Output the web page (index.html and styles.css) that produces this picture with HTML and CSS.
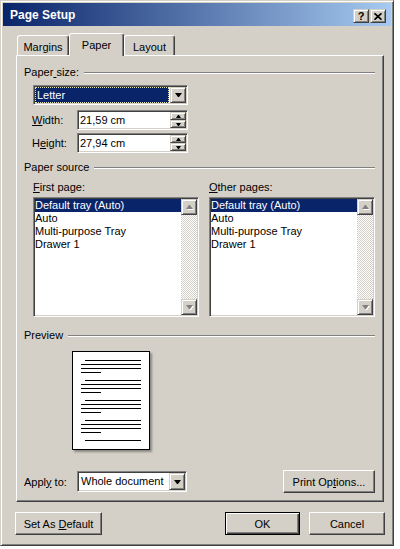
FILE: index.html
```html
<!DOCTYPE html>
<html lang="en">
<head>
  <meta charset="UTF-8">
  <meta name="viewport" content="width=device-width">
  <title>Page Setup</title>
  <link rel="stylesheet" href="styles.css">
</head>
<body>
  <div class="window">
    <div class="titlebar">
      <span class="title">Page Setup</span>
      <div class="caption-buttons">
        <span class="cbtn raised">?</span>
        <span class="cbtn raised">
          <svg width="8" height="7" viewBox="0 0 8 7"><path d="M0.5 0.3l7 6.4M7.5 0.3l-7 6.4" stroke="#000" stroke-width="1.7" fill="none"/></svg>
        </span>
      </div>
    </div>

    <div class="client">
      <div class="tabs">
        <div class="tab tab-margins">Margins</div>
        <div class="tab tab-paper active">Paper</div>
        <div class="tab tab-layout">Layout</div>
      </div>

      <div class="panel">
        <div class="group">Paper<u> </u>size:</div>
        <div class="combo combo-size">
          <span class="combo-value selected">Letter</span>
          <span class="drop raised"><i class="arrow-down"></i></span>
        </div>
        <div class="field-row first">
          <span class="field-label"><u>W</u>idth:</span>
          <div class="spin">
            <span class="spin-value">21,59 cm</span>
            <span class="spin-btns">
              <span class="spin-btn raised"><i class="arrow-up-sm"></i></span>
              <span class="spin-btn raised"><i class="arrow-down-sm"></i></span>
            </span>
          </div>
        </div>
        <div class="field-row">
          <span class="field-label">H<u>e</u>ight:</span>
          <div class="spin">
            <span class="spin-value">27,94 cm</span>
            <span class="spin-btns">
              <span class="spin-btn raised"><i class="arrow-up-sm"></i></span>
              <span class="spin-btn raised"><i class="arrow-down-sm"></i></span>
            </span>
          </div>
        </div>

        <div class="group group-source">Paper source</div>
        <div class="sources">
          <div class="source">
            <div class="source-label"><u>F</u>irst page:</div>
            <div class="list">
              <div class="list-items">
                <div class="item sel">Default tray (Auto)</div>
                <div class="item">Auto</div>
                <div class="item">Multi-purpose Tray</div>
                <div class="item">Drawer 1</div>
              </div>
              <div class="scrollbar">
                <span class="sb-btn raised"><i class="arrow-up dis"></i></span>
                <span class="sb-btn raised"><i class="arrow-down dis"></i></span>
              </div>
            </div>
          </div>
          <div class="source">
            <div class="source-label"><u>O</u>ther pages:</div>
            <div class="list">
              <div class="list-items">
                <div class="item sel">Default tray (Auto)</div>
                <div class="item">Auto</div>
                <div class="item">Multi-purpose Tray</div>
                <div class="item">Drawer 1</div>
              </div>
              <div class="scrollbar">
                <span class="sb-btn raised"><i class="arrow-up dis"></i></span>
                <span class="sb-btn raised"><i class="arrow-down dis"></i></span>
              </div>
            </div>
          </div>
        </div>

        <div class="group group-preview">Preview</div>
        <div class="page">
          <svg width="76" height="97" viewBox="0 0 76 97">
            <g stroke="#000" stroke-width="1">
              <path d="M12 8.5h56M8 12.5h60M8 16.5h60M8 20.5h20"/>
              <path d="M12 28.5h56M8 32.5h60M8 36.5h60M8 40.5h20"/>
              <path d="M12 48.5h56M8 52.5h60M8 56.5h60M8 60.5h20"/>
              <path d="M12 68.5h56M8 72.5h60M8 76.5h60M8 80.5h20"/>
              <path d="M12 88.5h56"/>
            </g>
          </svg>
        </div>

        <div class="apply-row">
          <span class="field-label">Appl<u>y</u> to:</span>
          <div class="combo combo-apply">
            <span class="combo-value">Whole document</span>
            <span class="drop raised"><i class="arrow-down"></i></span>
          </div>
          <button class="btn btn-print">Print Op<u>t</u>ions...</button>
        </div>
      </div>

      <div class="footer">
        <button class="btn btn-default-set">Set As <u>D</u>efault</button>
        <button class="btn btn-ok">OK</button>
        <button class="btn btn-cancel">Cancel</button>
      </div>
    </div>
  </div>
</body>
</html>
```

FILE: styles.css
```css
body {
  margin: 0;
  background: #fff;
  font: 11px "Liberation Sans", Arial, sans-serif;
  color: #000;
}
u {
  text-decoration: underline;
  text-underline-offset: 1px;
}
.window {
  width: 394px;
  height: 546px;
  box-sizing: border-box;
  background: #d4d0c8;
  border: 1px solid;
  border-color: #d4d0c8 #404040 #404040 #d4d0c8;
  box-shadow: inset 1px 1px #fff, inset -1px -1px #808080;
  padding: 2px;
  display: flex;
  flex-direction: column;
}
.raised {
  box-sizing: border-box;
  background: #d4d0c8;
  border: 1px solid;
  border-color: #d4d0c8 #404040 #404040 #d4d0c8;
  box-shadow: inset 1px 1px #fff, inset -1px -1px #808080;
}

/* caption */
.titlebar {
  height: 23px;
  display: flex;
  align-items: center;
  padding: 0 5px 0 7px;
  background: linear-gradient(to right, #0a246a, #a6caf0);
}
.title {
  color: #fff;
  font-weight: bold;
  font-size: 12px;
  flex: 1;
}
.caption-buttons {
  display: flex;
  gap: 1px;
  margin-top: 3px;
}
.cbtn {
  width: 16px;
  height: 14px;
  display: flex;
  align-items: center;
  justify-content: center;
  font-weight: bold;
  font-size: 11px;
  line-height: 12px;
}

/* client area */
.client {
  display: flex;
  flex-direction: column;
  padding: 7px 7px 0 13px;
}
.tabs {
  display: flex;
  align-items: flex-end;
  height: 22px;
  padding-left: 1px;
}
.tab {
  box-sizing: border-box;
  height: 20px;
  padding-top: 3px;
  line-height: 16px;
  text-align: center;
  border: 1px solid;
  border-bottom: none;
  border-color: #fff #404040 transparent #fff;
  box-shadow: inset -1px 0 #808080;
  border-radius: 3px 3px 0 0;
  background: #d4d0c8;
}
.tab-margins { width: 52px; }
.tab-paper { width: 55px; }
.tab-layout { width: 51px; }
.tab.active {
  height: 23px;
  margin-bottom: -1px;
  position: relative;
  z-index: 1;
}

.panel {
  border: 1px solid;
  border-color: #fff #404040 #404040 #fff;
  box-shadow: inset -1px -1px #808080;
  padding: 10px 8px 8px 7px;
}
.group {
  display: flex;
  align-items: center;
  height: 13px;
  line-height: 13px;
  white-space: pre;
}
.group::after {
  content: "";
  flex: 1;
  border-top: 1px solid #808080;
  border-bottom: 1px solid #fff;
  margin-left: 5px;
}
.group-source { margin-top: 8px; }
.group-preview { margin-top: 12px; }

/* sunken fields */
.combo,
.spin,
.list {
  box-sizing: border-box;
  background: #fff;
  border: 1px solid;
  border-color: #808080 #fff #fff #808080;
  box-shadow: inset 1px 1px #404040, inset -1px -1px #d4d0c8;
  padding: 1px;
  display: flex;
}
.combo-size {
  width: 155px;
  height: 20px;
  margin: 6px 0 0 9px;
}
.combo-apply {
  width: 110px;
  height: 21px;
}
.combo-value {
  flex: 1;
  line-height: 16px;
  padding-left: 2px;
  white-space: nowrap;
}
.combo-value.selected {
  background: #0a246a;
  color: #fff;
  outline: 1px dotted #e0e0b0;
  outline-offset: -1px;
  margin-right: 1px;
}
.drop {
  width: 16px;
  display: flex;
  align-items: center;
  justify-content: center;
}
.arrow-down,
.arrow-up {
  width: 1px;
  height: 0;
  border-left: 3px solid transparent;
  border-right: 3px solid transparent;
}
.arrow-down { border-top: 4px solid #000; }
.arrow-up { border-bottom: 4px solid #000; }
.arrow-down.dis { border-top-color: #808080; filter: drop-shadow(1px 1px 0 #fff); }
.arrow-up.dis { border-bottom-color: #808080; filter: drop-shadow(1px 1px 0 #fff); }
.arrow-down-sm,
.arrow-up-sm {
  width: 1px;
  height: 0;
  border-left: 2px solid transparent;
  border-right: 2px solid transparent;
}
.arrow-down-sm { border-top: 3px solid #000; }
.arrow-up-sm { border-bottom: 3px solid #000; }

.field-row {
  display: flex;
  align-items: center;
  margin: 3px 0 0 8px;
}
.field-row.first { margin-top: 5px; }
.field-label {
  width: 45px;
  white-space: nowrap;
}
.apply-row .field-label { width: 53px; }
.spin {
  width: 111px;
  height: 20px;
}
.spin-value {
  flex: 1;
  line-height: 16px;
  padding-left: 1px;
}
.spin-btns {
  width: 16px;
  display: flex;
  flex-direction: column;
}
.spin-btn {
  height: 8px;
  display: flex;
  align-items: center;
  justify-content: center;
}

/* paper source lists */
.sources {
  display: flex;
  gap: 10px;
  margin: 7px 0 0 9px;
}
.source-label {
  height: 13px;
  line-height: 13px;
  margin-bottom: 3px;
}
.list {
  width: 166px;
  height: 120px;
}
.list-items { flex: 1; }
.item {
  height: 13px;
  line-height: 13px;
  white-space: nowrap;
}
.item.sel {
  background: #0a246a;
  color: #fff;
}
.scrollbar {
  width: 16px;
  display: flex;
  flex-direction: column;
  justify-content: space-between;
  background: repeating-conic-gradient(#fff 0 25%, #d4d0c8 0 50%) 0 0 / 2px 2px;
}
.sb-btn {
  height: 16px;
  display: flex;
  align-items: center;
  justify-content: center;
}

/* preview */
.page {
  width: 78px;
  height: 99px;
  box-sizing: border-box;
  border: 1px solid #000;
  background: #fff;
  box-shadow: 2px 2px 2px rgba(0, 0, 0, 0.35);
  margin: 9px 0 0 48px;
}
.page svg { display: block; }

.apply-row {
  display: flex;
  align-items: center;
  height: 23px;
  margin-top: 20px;
}

/* push buttons */
.btn {
  font: inherit;
  color: #000;
  height: 23px;
  padding: 0;
  box-sizing: border-box;
  background: #d4d0c8;
  border: 1px solid;
  border-color: #fff #404040 #404040 #fff;
  box-shadow: inset -1px -1px #808080;
}
.btn-print {
  width: 92px;
  margin-left: auto;
}
.footer {
  display: flex;
  margin: 10px -1px 0 -1px;
}
.btn-default-set { width: 87px; }
.btn-ok {
  width: 75px;
  margin-left: auto;
  border-color: #000;
  box-shadow: inset 1px 1px #fff, inset -1px -1px #404040, inset -2px -2px #808080;
}
.btn-cancel {
  width: 76px;
  margin-left: 9px;
}
```
